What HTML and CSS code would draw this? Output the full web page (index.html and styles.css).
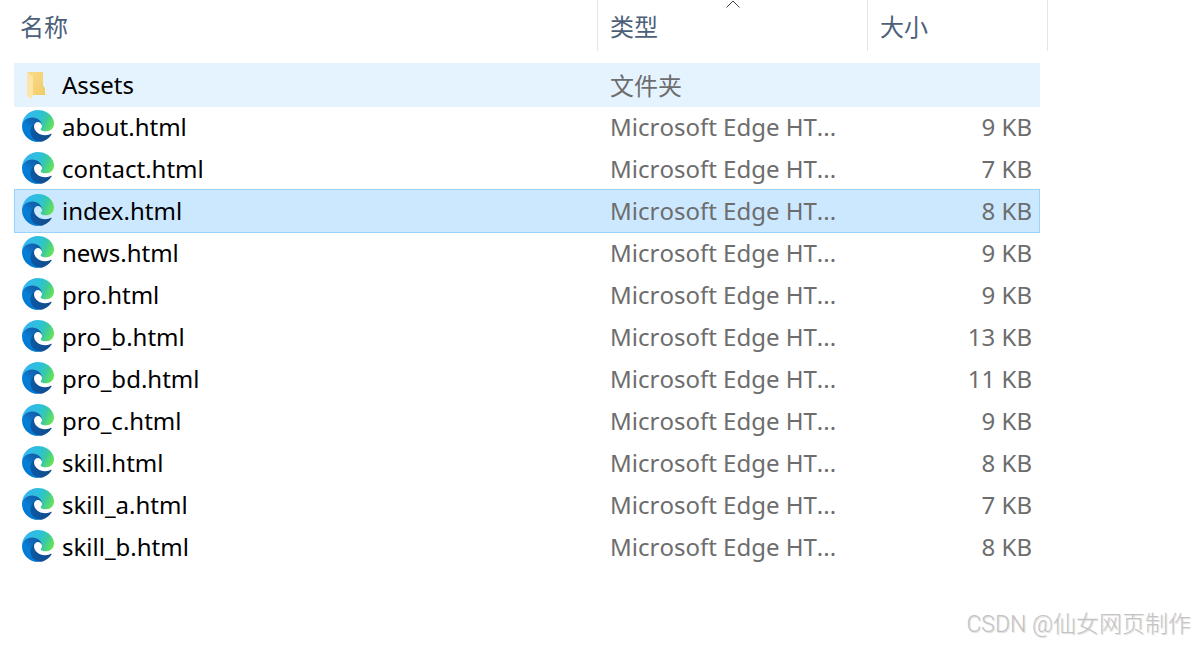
FILE: index.html
```html
<!DOCTYPE html>
<html lang="zh-CN">
<head>
<meta charset="utf-8">
<title>文件列表</title>
<link rel="stylesheet" href="styles.css">
</head>
<body>
<svg class="defs" width="0" height="0" aria-hidden="true">
  <defs>
    <linearGradient id="e1" gradientUnits="userSpaceOnUse" x1="63" y1="178" x2="241" y2="178"><stop offset="0" stop-color="#0c59a4"/><stop offset="1" stop-color="#114a8b"/></linearGradient>
    <linearGradient id="e2" gradientUnits="userSpaceOnUse" x1="157" y1="100" x2="46" y2="221"><stop offset="0" stop-color="#125da8"/><stop offset=".3" stop-color="#1068b8"/><stop offset=".67" stop-color="#0680d7"/><stop offset="1" stop-color="#0078d4"/></linearGradient>
    <linearGradient id="e3" gradientUnits="userSpaceOnUse" x1="50" y1="40" x2="250" y2="130"><stop offset="0" stop-color="#35b8ee"/><stop offset=".45" stop-color="#2cc2d6"/><stop offset=".7" stop-color="#3bcaa0"/><stop offset="1" stop-color="#66e25a"/></linearGradient>
    <linearGradient id="f1" x1="0" y1="0" x2="1" y2="1"><stop offset="0" stop-color="#fadb8b"/><stop offset="1" stop-color="#f3cc68"/></linearGradient>
    <symbol id="edge" viewBox="4.6 4.9 256 256" preserveAspectRatio="xMidYMin meet">
      <path fill="url(#e1)" d="M235.68 195.46a93.73 93.73 0 0 1-10.54 4.71 101.87 101.87 0 0 1-35.9 6.46c-47.32 0-88.54-32.55-88.54-74.32A31.48 31.48 0 0 1 117.13 105c-42.8 1.8-53.8 46.4-53.8 72.53 0 73.88 68.09 81.37 82.76 81.37 7.91 0 19.84-2.3 27-4.56l1.31-.44a128.34 128.34 0 0 0 66.6-52.8 4 4 0 0 0-5.32-5.64z"/>
      <path fill="url(#e2)" d="M110.34 246.34A79.2 79.2 0 0 1 87.6 225a80.72 80.72 0 0 1 29.53-120c3.12-1.47 8.45-4.13 15.54-4a32.35 32.35 0 0 1 25.69 13 31.88 31.88 0 0 1 6.36 18.66c0-.21 24.46-79.6-80-79.6-43.9 0-80 41.66-80 78.21a130.15 130.15 0 0 0 12.11 56 128 128 0 0 0 156.38 67.11 75.55 75.55 0 0 1-62.78-8z"/>
      <path fill="url(#e3)" d="M156.94 153.78c-.81 1.05-3.3 2.5-3.3 5.66 0 2.61 1.7 5.12 4.72 7.23 14.38 10 41.49 8.68 41.56 8.68a59.56 59.56 0 0 0 30.27-8.35 61.38 61.38 0 0 0 30.43-52.88c.26-22.41-8-37.31-11.34-43.91C228.09 28.76 182.35 4.92 132.61 4.92a128 128 0 0 0-128 126.2c.48-36.54 36.8-66.05 80-66.05 3.5 0 23.46.34 42 10.07 16.34 8.58 24.9 18.94 30.85 29.21 6.18 10.67 7.28 24.15 7.28 29.52s-2.74 13.33-7.8 19.91z"/>
    </symbol>
    <symbol id="folder" viewBox="0 0 32 32" preserveAspectRatio="xMidYMin meet">
      <path fill="url(#f1)" d="M5 4h16v14l2 2v7H9z"/>
      <path fill="#f3cc68" d="M21 19l1-1v8l2 1h-3z"/>
      <path fill="#fde5aa" d="M5 4l6 5v18l-1 4-5-3z"/>
    </symbol>
  </defs>
</svg>
<main class="explorer">
  <table class="files">
    <thead>
      <tr>
        <th class="col-name" scope="col"><button class="heading" type="button">名称</button></th>
        <th class="col-type" scope="col" aria-sort="ascending"><button class="heading" type="button">类型<svg class="sort" viewBox="0 0 14 8" aria-hidden="true"><path d="M.5 7.5 7 1l6.500 6.500"/></svg></button></th>
        <th class="col-size" scope="col"><button class="heading heading-last" type="button">大小</button></th>
      </tr>
    </thead>
    <tbody>
      <tr class="hovered"><td><span class="file"><svg class="icon" aria-hidden="true"><use href="#folder"/></svg>Assets</span></td><td class="type">文件夹</td><td class="size"></td></tr>
      <tr><td><span class="file"><svg class="icon" aria-hidden="true"><use href="#edge"/></svg>about.html</span></td><td class="type">Microsoft Edge HT...</td><td class="size">9 KB</td></tr>
      <tr><td><span class="file"><svg class="icon" aria-hidden="true"><use href="#edge"/></svg>contact.html</span></td><td class="type">Microsoft Edge HT...</td><td class="size">7 KB</td></tr>
      <tr class="selected"><td><span class="file"><svg class="icon" aria-hidden="true"><use href="#edge"/></svg>index.html</span></td><td class="type">Microsoft Edge HT...</td><td class="size">8 KB</td></tr>
      <tr><td><span class="file"><svg class="icon" aria-hidden="true"><use href="#edge"/></svg>news.html</span></td><td class="type">Microsoft Edge HT...</td><td class="size">9 KB</td></tr>
      <tr><td><span class="file"><svg class="icon" aria-hidden="true"><use href="#edge"/></svg>pro.html</span></td><td class="type">Microsoft Edge HT...</td><td class="size">9 KB</td></tr>
      <tr><td><span class="file"><svg class="icon" aria-hidden="true"><use href="#edge"/></svg>pro_b.html</span></td><td class="type">Microsoft Edge HT...</td><td class="size">13 KB</td></tr>
      <tr><td><span class="file"><svg class="icon" aria-hidden="true"><use href="#edge"/></svg>pro_bd.html</span></td><td class="type">Microsoft Edge HT...</td><td class="size">11 KB</td></tr>
      <tr><td><span class="file"><svg class="icon" aria-hidden="true"><use href="#edge"/></svg>pro_c.html</span></td><td class="type">Microsoft Edge HT...</td><td class="size">9 KB</td></tr>
      <tr><td><span class="file"><svg class="icon" aria-hidden="true"><use href="#edge"/></svg>skill.html</span></td><td class="type">Microsoft Edge HT...</td><td class="size">8 KB</td></tr>
      <tr><td><span class="file"><svg class="icon" aria-hidden="true"><use href="#edge"/></svg>skill_a.html</span></td><td class="type">Microsoft Edge HT...</td><td class="size">7 KB</td></tr>
      <tr><td><span class="file"><svg class="icon" aria-hidden="true"><use href="#edge"/></svg>skill_b.html</span></td><td class="type">Microsoft Edge HT...</td><td class="size">8 KB</td></tr>
    </tbody>
  </table>
  <p class="watermark">CSDN @仙女网页制作</p>
</main>
</body>
</html>
```
FILE: styles.css
```css
* { box-sizing: border-box; }

body {
  margin: 0;
  background: #fff;
  color: #000;
  font: 24px/32px "Noto Sans", "Noto Sans CJK SC", sans-serif;
}

.defs { position: absolute; }

.explorer {
  min-height: 100vh;
  display: flex;
  flex-direction: column;
  justify-content: space-between;
}

.files {
  width: calc(100% - 171px);
  margin-left: 15px;
  table-layout: fixed;
  border-spacing: 0;
}

.col-type { width: 270px; }
.col-size { width: 171px; }

th {
  padding: 0 0 13px;
  font-weight: 400;
}

.heading {
  position: relative;
  display: block;
  width: 100%;
  height: 51px;
  padding: 0 12px;
  border: 0;
  border-right: 1px solid #e5e5e5;
  background: none;
  color: #4c607a;
  font: 400 24px/32px "Noto Sans CJK SC", sans-serif;
  text-align: left;
}

.col-name .heading { padding-left: 5px; }
.heading-last { width: calc(100% + 9px); }

.sort {
  position: absolute;
  top: 0;
  left: 50%;
  width: 14px;
  height: 8px;
  margin-left: -7px;
  fill: none;
  stroke: #444;
}

td {
  height: 42px;
  padding: 0;
  white-space: nowrap;
}

.file {
  display: flex;
  align-items: center;
  gap: 8px;
  padding-left: 7px;
}

.icon {
  width: 32px;
  height: 34px;
}

.type {
  padding-left: 12px;
  color: #6d6d6d;
  font-kerning: none;
}

.size {
  padding-right: 7px;
  color: #6d6d6d;
  text-align: right;
}

.hovered { background: #e5f3ff; outline: 1px solid #e5f3ff; }
.selected { background: #cce8ff; outline: 1px solid #99d1ff; }

.hovered .type { font-family: "Noto Sans CJK SC", sans-serif; }

.watermark {
  margin: 0;
  padding: 0 4px 4px;
  color: #c4c4c4;
  font: 300 23px/32px Roboto, "Noto Sans CJK SC", sans-serif;
  text-align: right;
  text-shadow: 1px 1px 1px #ddd;
}
```
